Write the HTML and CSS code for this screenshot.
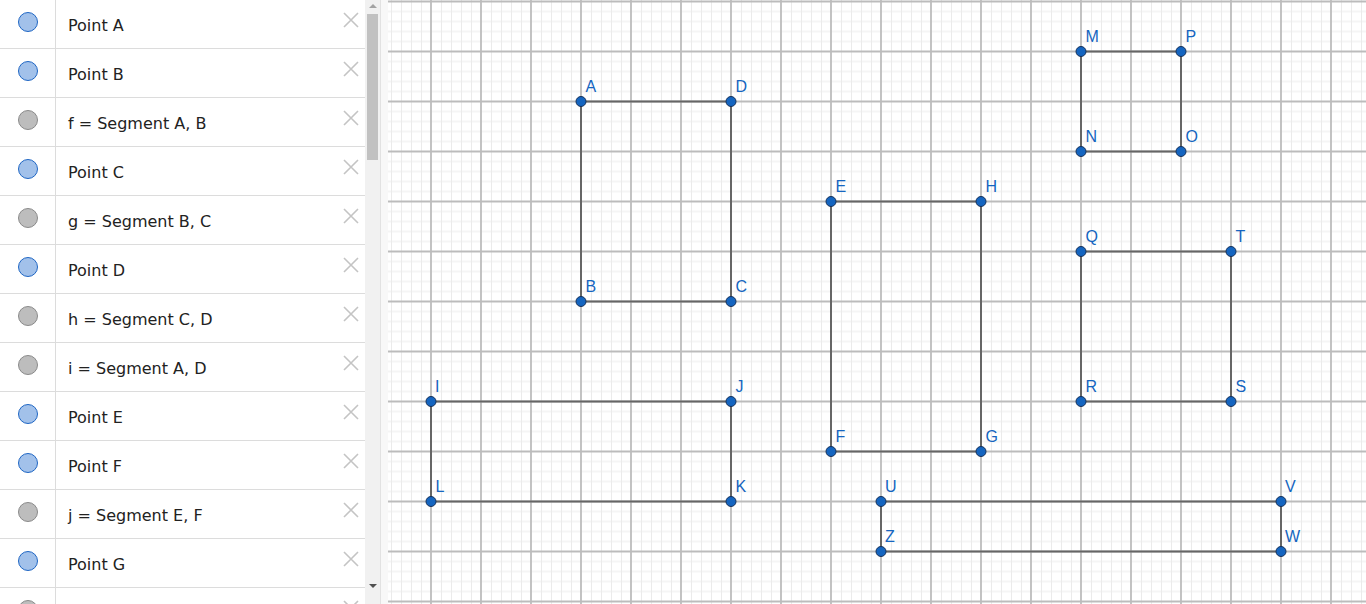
FILE: index.html
```html
<!DOCTYPE html>
<html>
<head>
<meta charset="utf-8">
<link rel="stylesheet" href="styles.css">
</head>
<body>
<div class="app">
  <aside class="algebra">
    <div class="list">
      <div class="row"><div class="marker"><span class="dot blue"></span></div><div class="content"><span class="text">Point A</span><svg class="close" viewBox="0 0 16 16"><path d="M1 1L15 15M15 1L1 15"/></svg></div></div>
      <div class="row"><div class="marker"><span class="dot blue"></span></div><div class="content"><span class="text">Point B</span><svg class="close" viewBox="0 0 16 16"><path d="M1 1L15 15M15 1L1 15"/></svg></div></div>
      <div class="row"><div class="marker"><span class="dot grey"></span></div><div class="content"><span class="text">f = Segment A, B</span><svg class="close" viewBox="0 0 16 16"><path d="M1 1L15 15M15 1L1 15"/></svg></div></div>
      <div class="row"><div class="marker"><span class="dot blue"></span></div><div class="content"><span class="text">Point C</span><svg class="close" viewBox="0 0 16 16"><path d="M1 1L15 15M15 1L1 15"/></svg></div></div>
      <div class="row"><div class="marker"><span class="dot grey"></span></div><div class="content"><span class="text">g = Segment B, C</span><svg class="close" viewBox="0 0 16 16"><path d="M1 1L15 15M15 1L1 15"/></svg></div></div>
      <div class="row"><div class="marker"><span class="dot blue"></span></div><div class="content"><span class="text">Point D</span><svg class="close" viewBox="0 0 16 16"><path d="M1 1L15 15M15 1L1 15"/></svg></div></div>
      <div class="row"><div class="marker"><span class="dot grey"></span></div><div class="content"><span class="text">h = Segment C, D</span><svg class="close" viewBox="0 0 16 16"><path d="M1 1L15 15M15 1L1 15"/></svg></div></div>
      <div class="row"><div class="marker"><span class="dot grey"></span></div><div class="content"><span class="text">i = Segment A, D</span><svg class="close" viewBox="0 0 16 16"><path d="M1 1L15 15M15 1L1 15"/></svg></div></div>
      <div class="row"><div class="marker"><span class="dot blue"></span></div><div class="content"><span class="text">Point E</span><svg class="close" viewBox="0 0 16 16"><path d="M1 1L15 15M15 1L1 15"/></svg></div></div>
      <div class="row"><div class="marker"><span class="dot blue"></span></div><div class="content"><span class="text">Point F</span><svg class="close" viewBox="0 0 16 16"><path d="M1 1L15 15M15 1L1 15"/></svg></div></div>
      <div class="row"><div class="marker"><span class="dot grey"></span></div><div class="content"><span class="text">j = Segment E, F</span><svg class="close" viewBox="0 0 16 16"><path d="M1 1L15 15M15 1L1 15"/></svg></div></div>
      <div class="row"><div class="marker"><span class="dot blue"></span></div><div class="content"><span class="text">Point G</span><svg class="close" viewBox="0 0 16 16"><path d="M1 1L15 15M15 1L1 15"/></svg></div></div>
      <div class="row"><div class="marker"><span class="dot grey"></span></div><div class="content"><span class="text"></span><svg class="close" viewBox="0 0 16 16"><path d="M1 1L15 15M15 1L1 15"/></svg></div></div>
    </div>
    <div class="scrollbar">
      <div class="arrow-box"><span class="arrow up"></span></div>
      <div class="thumb"></div>
      <div class="track-rest"></div>
      <div class="arrow-box bottom"><span class="arrow down"></span></div>
    </div>
  </aside>
  <div class="splitter"></div>
  <main class="graphics">
    <svg class="canvas" width="978" height="604" viewBox="388 0 978 604">
      <defs>
        <pattern id="grid" patternUnits="userSpaceOnUse" x="6" y="-23.5" width="50" height="50">
          <g class="minor">
            <line x1="5.5" y1="0" x2="5.5" y2="50"/>
            <line x1="15.5" y1="0" x2="15.5" y2="50"/>
            <line x1="35.5" y1="0" x2="35.5" y2="50"/>
            <line x1="45.5" y1="0" x2="45.5" y2="50"/>
            <line x1="0" y1="5" x2="50" y2="5"/>
            <line x1="0" y1="15" x2="50" y2="15"/>
            <line x1="0" y1="35" x2="50" y2="35"/>
            <line x1="0" y1="45" x2="50" y2="45"/>
          </g>
          <g class="major">
            <line x1="25" y1="0" x2="25" y2="50"/>
            <line x1="0" y1="25" x2="50" y2="25"/>
          </g>
        </pattern>
      </defs>
      <rect x="388" y="0" width="978" height="604" fill="#ffffff"/>
      <rect x="388" y="0" width="978" height="604" fill="url(#grid)"/>
      <g class="segs">
        <polygon points="581,101.5 731,101.5 731,301.5 581,301.5"/>
        <polygon points="831,201.5 981,201.5 981,451.5 831,451.5"/>
        <polygon points="1081,51.5 1181,51.5 1181,151.5 1081,151.5"/>
        <polygon points="1081,251.5 1231,251.5 1231,401.5 1081,401.5"/>
        <polygon points="431,401.5 731,401.5 731,501.5 431,501.5"/>
        <polygon points="881,501.5 1281,501.5 1281,551.5 881,551.5"/>
      </g>
      <g class="pts">
        <circle cx="581" cy="101.5" r="5"/><circle cx="731" cy="101.5" r="5"/>
        <circle cx="581" cy="301.5" r="5"/><circle cx="731" cy="301.5" r="5"/>
        <circle cx="831" cy="201.5" r="5"/><circle cx="981" cy="201.5" r="5"/>
        <circle cx="831" cy="451.5" r="5"/><circle cx="981" cy="451.5" r="5"/>
        <circle cx="1081" cy="51.5" r="5"/><circle cx="1181" cy="51.5" r="5"/>
        <circle cx="1081" cy="151.5" r="5"/><circle cx="1181" cy="151.5" r="5"/>
        <circle cx="1081" cy="251.5" r="5"/><circle cx="1231" cy="251.5" r="5"/>
        <circle cx="1081" cy="401.5" r="5"/><circle cx="1231" cy="401.5" r="5"/>
        <circle cx="431" cy="401.5" r="5"/><circle cx="731" cy="401.5" r="5"/>
        <circle cx="431" cy="501.5" r="5"/><circle cx="731" cy="501.5" r="5"/>
        <circle cx="881" cy="501.5" r="5"/><circle cx="1281" cy="501.5" r="5"/>
        <circle cx="881" cy="551.5" r="5"/><circle cx="1281" cy="551.5" r="5"/>
      </g>
      <g class="labels">
        <text x="585.5" y="92">A</text><text x="735.5" y="92">D</text>
        <text x="585.5" y="292">B</text><text x="735.5" y="292">C</text>
        <text x="835.5" y="192">E</text><text x="985.5" y="192">H</text>
        <text x="835.5" y="442">F</text><text x="985.5" y="442">G</text>
        <text x="1085.5" y="42">M</text><text x="1185.5" y="42">P</text>
        <text x="1085.5" y="142">N</text><text x="1185.5" y="142">O</text>
        <text x="1085.5" y="242">Q</text><text x="1235.5" y="242">T</text>
        <text x="1085.5" y="392">R</text><text x="1235.5" y="392">S</text>
        <text x="435" y="392">I</text><text x="735.5" y="392">J</text>
        <text x="435.5" y="492">L</text><text x="735.5" y="492">K</text>
        <text x="885" y="492">U</text><text x="1285" y="492">V</text>
        <text x="885" y="542">Z</text><text x="1285" y="542">W</text>
      </g>
    </svg>
  </main>
</div>
</body>
</html>
```

FILE: styles.css
```css
html, body {
  margin: 0;
  padding: 0;
  background: #ffffff;
}

.app {
  display: flex;
  width: 1366px;
  height: 604px;
  overflow: hidden;
}

.algebra {
  display: flex;
  width: 380px;
  height: 604px;
  flex: none;
  background: #ffffff;
}

.list {
  width: 365px;
  height: 604px;
  overflow: hidden;
  flex: none;
}

.row {
  display: flex;
  height: 48px;
  border-bottom: 1px solid #dcdcdc;
}

.marker {
  width: 56px;
  flex: none;
  border-right: 1px solid #dcdcdc;
  display: flex;
  justify-content: center;
  align-items: flex-start;
  padding-top: 12px;
  box-sizing: border-box;
}

.dot {
  display: block;
  width: 20px;
  height: 20px;
  border-radius: 50%;
  box-sizing: border-box;
}

.dot.blue {
  background: #a2c1ea;
  border: 1px solid #1f66c4;
}

.dot.grey {
  background: #bdbdbd;
  border: 1px solid #8a8a8a;
}

.content {
  flex: 1;
  display: flex;
  align-items: center;
  padding-left: 12px;
  padding-right: 6px;
}

.text {
  flex: 1;
  font-family: "DejaVu Sans", sans-serif;
  font-size: 16px;
  line-height: 20px;
  color: #222222;
  padding-top: 4px;
  white-space: nowrap;
}

.close {
  width: 16px;
  height: 16px;
  align-self: flex-start;
  margin-top: 12px;
  flex: none;
}

.close path {
  stroke: #c4c4c4;
  stroke-width: 1.6;
  fill: none;
}

.scrollbar {
  width: 15px;
  flex: none;
  background: #f1f1f1;
  display: flex;
  flex-direction: column;
  align-items: center;
}

.arrow-box {
  height: 14px;
  width: 15px;
  display: flex;
  justify-content: center;
  align-items: center;
  flex: none;
}

.arrow-box.bottom {
  height: 22px;
  align-items: flex-start;
  padding-top: 2px;
  box-sizing: border-box;
}

.arrow {
  width: 0;
  height: 0;
  border-left: 4px solid transparent;
  border-right: 4px solid transparent;
}

.arrow.up {
  border-bottom: 4px solid #a3a3a3;
  margin-top: -2px;
}

.arrow.down {
  border-top: 4px solid #505050;
}

.thumb {
  width: 11px;
  height: 146px;
  background: #c1c1c1;
  flex: none;
}

.track-rest {
  flex: 1;
}

.splitter {
  width: 8px;
  flex: none;
  background: #f8f8f8;
  border-left: 1px solid #e2e2e2;
  box-sizing: border-box;
}

.graphics {
  flex: 1;
  height: 604px;
  overflow: hidden;
}

.canvas {
  display: block;
}

.minor line {
  stroke: #ebebeb;
  stroke-width: 1;
}

.major line {
  stroke: #bcbcbc;
  stroke-width: 1.8;
}

.segs polygon {
  fill: none;
  stroke: #666666;
  stroke-width: 2;
}

.pts circle {
  fill: #1565c0;
  stroke: #14305a;
  stroke-width: 1;
}

.labels text {
  font-family: "Liberation Sans", Arial, sans-serif;
  font-size: 16px;
  fill: #1565c0;
}
```
